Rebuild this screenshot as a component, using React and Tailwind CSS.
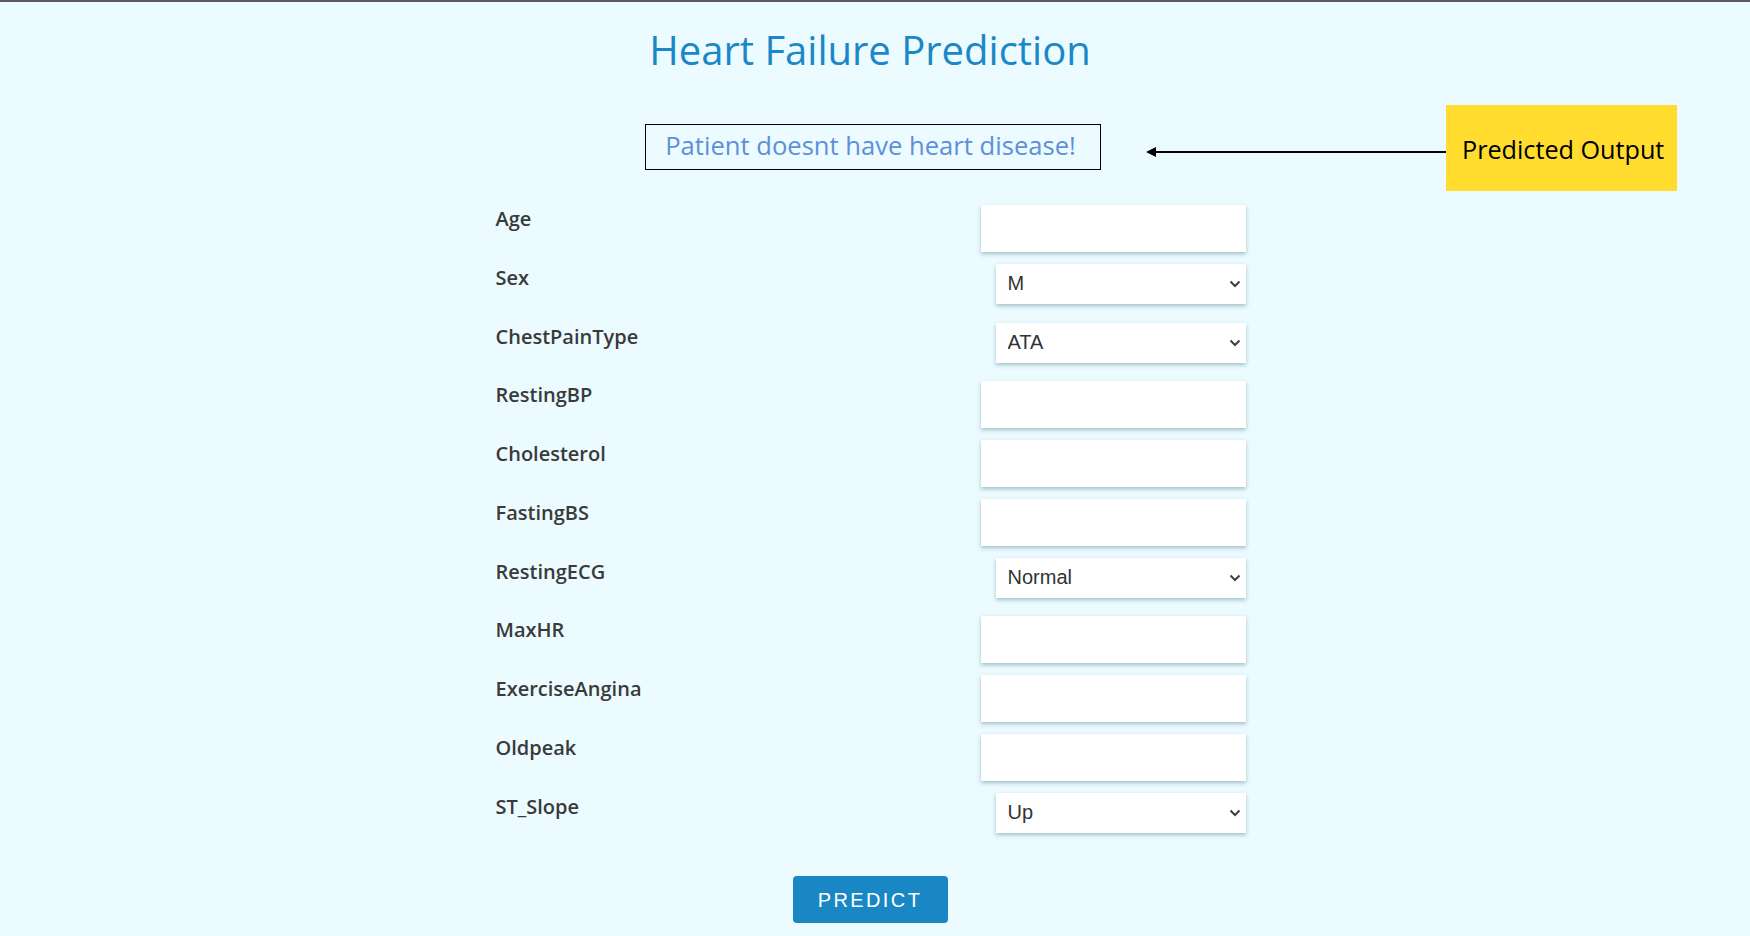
import React from 'react';

// Form fields, in order; selects carry their current value
const fields = [
  { name: 'Age' },
  { name: 'Sex', options: ['M', 'F'] },
  { name: 'ChestPainType', options: ['ATA', 'NAP', 'ASY', 'TA'] },
  { name: 'RestingBP' },
  { name: 'Cholesterol' },
  { name: 'FastingBS' },
  { name: 'RestingECG', options: ['Normal', 'ST', 'LVH'] },
  { name: 'MaxHR' },
  { name: 'ExerciseAngina' },
  { name: 'Oldpeak' },
  { name: 'ST_Slope', options: ['Up', 'Flat', 'Down'] },
];

const Chevron = () => (
  <svg width="12" height="8" viewBox="0 0 12 8" className="pointer-events-none absolute right-[5px] top-1/2 -translate-y-1/2">
    <path d="M1.5 1.5 L6 6 L10.5 1.5" fill="none" stroke="#404040" strokeWidth="2" />
  </svg>
);

const FieldRow = ({ field }) => (
  <div className="flex items-start justify-between h-[58.75px]">
    <label className="ml-[1px] text-[20px] leading-[27px] font-semibold text-[#3a3a3a]">{field.name}</label>
    {field.options ? (
      <div className="relative w-[250px] h-[40px] bg-white shadow-[0_2px_4px_rgba(70,120,140,0.45)]">
        <select
          defaultValue={field.options[0]}
          className="appearance-none w-full h-full bg-transparent pl-[12px] pr-6 pb-[1px] text-[20px] text-[#333] font-['Liberation_Sans',Arial,sans-serif] outline-none"
        >
          {field.options.map((o) => (
            <option key={o}>{o}</option>
          ))}
        </select>
        <Chevron />
      </div>
    ) : (
      <input
        type="text"
        className="w-[265px] h-[47px] bg-white shadow-[0_2px_4px_rgba(70,120,140,0.45)] outline-none px-3 text-[20px]"
      />
    )}
  </div>
);

export default function App() {
  return (
    <div className="relative min-h-screen bg-[#ebfbff] border-t-2 border-[#5a5a5a] font-['Open_Sans',sans-serif]">
      <div className="w-[1740px] flex flex-col items-center">
        <h1 className="mt-[21px] text-[40px] leading-[54px] text-[#1a87c6]">Heart Failure Prediction</h1>

        {/* Result */}
        <div className="mt-[47px] ml-[6px] w-[456px] h-[46px] border border-black flex items-center justify-center pr-[5px] pb-[2px] text-[25.6px] leading-[34px] text-[#5f8fd8]">
          Patient doesnt have heart disease!
        </div>

        {/* Form */}
        <form className="mt-[35px] w-[751px]" onSubmit={(e) => e.preventDefault()}>
          {fields.map((f) => (
            <FieldRow key={f.name} field={f} />
          ))}
        </form>

        <button className="mt-[25px] w-[155px] h-[47px] rounded-[4px] bg-[#1a87c5] text-white text-[20px] tracking-[2.4px] font-['Liberation_Sans',Arial,sans-serif]">
          PREDICT
        </button>
      </div>

      {/* Annotation */}
      <div className="absolute left-[1146px] top-[103px] flex items-start">
        <svg width="300" height="12" viewBox="0 0 300 12" className="mt-[41px]">
          <polygon points="0,6 10,1 10,11" fill="#000" />
          <line x1="8" y1="6" x2="300" y2="6" stroke="#000" strokeWidth="2" />
        </svg>
        <div className="w-[231px] h-[86px] bg-[#ffdc2e] flex items-center pl-[16px] pt-[3px] text-[25.2px] text-black">
          Predicted Output
        </div>
      </div>
    </div>
  );
}
